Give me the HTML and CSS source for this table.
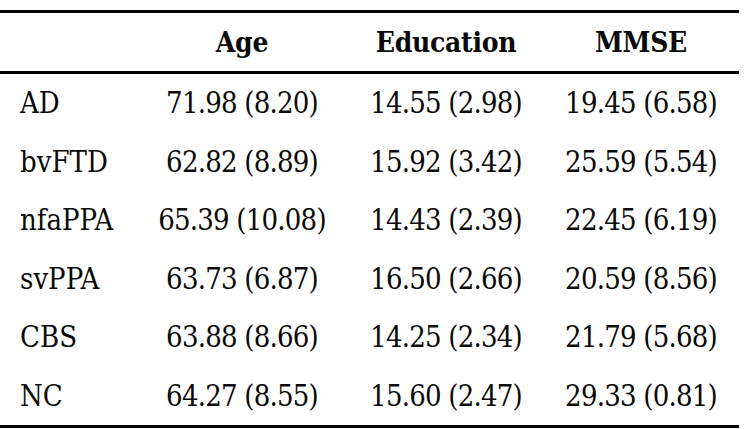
FILE: index.html
```html
<!DOCTYPE html>
<html>
<head>
<meta charset="utf-8">
<link rel="stylesheet" href="styles.css">
</head>
<body>
<div class="table">
  <div class="row head">
    <div class="cell label"></div>
    <div class="cell">Age</div>
    <div class="cell">Education</div>
    <div class="cell">MMSE</div>
  </div>
  <div class="body">
    <div class="row">
      <div class="cell label">AD</div>
      <div class="cell">71.98 (8.20)</div>
      <div class="cell">14.55 (2.98)</div>
      <div class="cell">19.45 (6.58)</div>
    </div>
    <div class="row">
      <div class="cell label">bvFTD</div>
      <div class="cell">62.82 (8.89)</div>
      <div class="cell">15.92 (3.42)</div>
      <div class="cell">25.59 (5.54)</div>
    </div>
    <div class="row">
      <div class="cell label">nfaPPA</div>
      <div class="cell">65.39 (10.08)</div>
      <div class="cell">14.43 (2.39)</div>
      <div class="cell">22.45 (6.19)</div>
    </div>
    <div class="row">
      <div class="cell label">svPPA</div>
      <div class="cell">63.73 (6.87)</div>
      <div class="cell">16.50 (2.66)</div>
      <div class="cell">20.59 (8.56)</div>
    </div>
    <div class="row">
      <div class="cell label">CBS</div>
      <div class="cell">63.88 (8.66)</div>
      <div class="cell">14.25 (2.34)</div>
      <div class="cell">21.79 (5.68)</div>
    </div>
    <div class="row">
      <div class="cell label">NC</div>
      <div class="cell">64.27 (8.55)</div>
      <div class="cell">15.60 (2.47)</div>
      <div class="cell">29.33 (0.81)</div>
    </div>
  </div>
</div>
</body>
</html>
```
FILE: styles.css
```css
html, body {
  margin: 0;
  padding: 0;
  background: #ffffff;
}
body {
  padding-top: 10px;
}
.table {
  width: 739px;
  border-top: 3px solid #000;
  border-bottom: 3px solid #000;
  font-family: "DejaVu Serif", serif;
  font-stretch: condensed;
  font-size: 29px;
  color: #0a0a0a;
}
.head {
  height: 58px;
  border-bottom: 3px solid #000;
  font-weight: bold;
  font-size: 28px;
  letter-spacing: -0.3px;
}
.row {
  display: grid;
  grid-template-columns: 135px 214px 194px 196px;
  align-items: center;
}
.body .row {
  height: 58.5px;
}
.cell {
  text-align: center;
  white-space: nowrap;
}
.body .cell {
  letter-spacing: -0.8px;
}
.body .cell.label {
  letter-spacing: 0;
}
.cell.label {
  text-align: left;
  padding-left: 20px;
}
```
